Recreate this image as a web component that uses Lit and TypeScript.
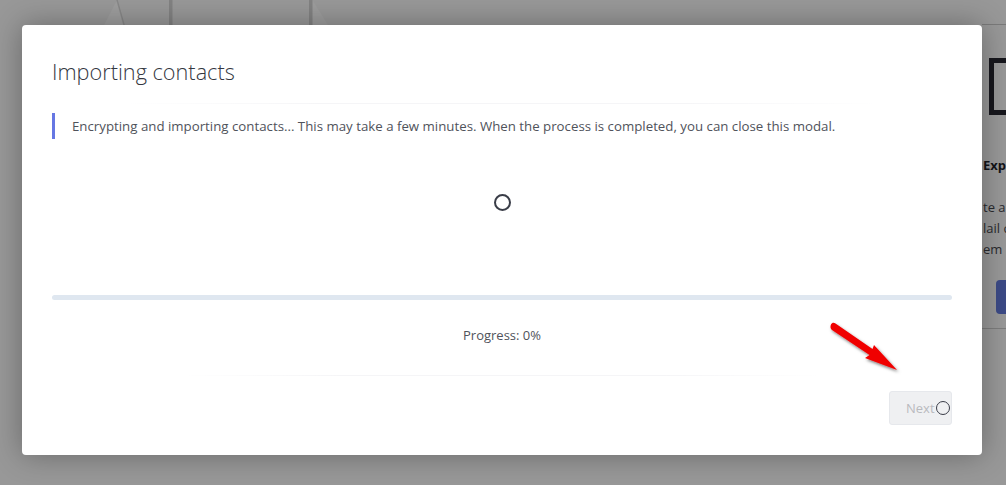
import { LitElement, html, css, svg } from "lit";
import { customElement } from "lit/decorators.js";

@customElement("app-root")
export class AppRoot extends LitElement {
  static styles = css`
    :host {
      display: block;
      position: relative;
      width: 1006px;
      height: 485px;
      overflow: hidden;
      font-family: "Open Sans", "Noto Sans", sans-serif;
      background: #989898;
    }
    .bg { position: absolute; inset: 0; }
    .side {
      position: absolute;
      left: 982px;
      top: 0;
      width: 24px;
      height: 485px;
      overflow: hidden;
      font-size: 13px;
      color: #1e1e22;
    }
    .glyph {
      position: absolute;
      left: 7px;
      top: 58px;
      width: 30px;
      height: 57px;
      border: 5px solid #17171d;
      box-sizing: border-box;
      border-right: 0;
    }
    .side-t { position: absolute; white-space: nowrap; line-height: 18px; }
    .exp { left: 1px; top: 156px; font-weight: 700; color: #141418; }
    .l1 { left: 1px; top: 198px; color: #2a2a2e; }
    .l2 { left: 1px; top: 219px; color: #2a2a2e; }
    .l3 { left: 1px; top: 240px; color: #2a2a2e; }
    .cta {
      position: absolute;
      left: 14px;
      top: 280px;
      width: 30px;
      height: 34px;
      border-radius: 4px;
      background: #3c4a86;
    }
    .rule {
      position: absolute;
      left: 0;
      top: 328px;
      width: 24px;
      height: 1px;
      background: #7d7d7d;
    }
    .top-rule {
      position: absolute;
      left: 0;
      top: 24px;
      width: 24px;
      height: 1px;
      background: #7a7a7a;
    }
    .modal {
      position: absolute;
      left: 22px;
      top: 25px;
      width: 960px;
      height: 430px;
      box-sizing: border-box;
      padding: 30px 30px 30px;
      background: #fff;
      border-radius: 4px;
      box-shadow: 0 0 30px rgba(0, 0, 0, 0.32);
      display: flex;
      flex-direction: column;
      color: #4a4d55;
    }
    h1 {
      margin: 0;
      height: 34px;
      font-size: 21.7px;
      line-height: 34px;
      font-weight: 300;
      color: #34373f;
    }
    .div1 {
      margin-top: 14px;
      height: 1px;
      background: linear-gradient(90deg, #fff 8%, #f5f5f7 30%, #f5f5f7 70%, #fff 92%);
    }
    .alert {
      margin-top: 9px;
      height: 26px;
      border-left: 3px solid #6677e3;
      padding-left: 17px;
      font-size: 13.27px;
      line-height: 26px;
      white-space: nowrap;
      color: #50535b;
    }
    .spin-row {
      display: flex;
      justify-content: center;
      margin-top: 55px;
      height: 18px;
    }
    .spin {
      width: 17px;
      height: 17px;
      box-sizing: border-box;
      border: 2px solid #3a3d48;
      border-radius: 50%;
    }
    .bar {
      margin-top: 84px;
      height: 6px;
      border-radius: 3px;
      background: #dfe7f0;
    }
    .progress {
      margin-top: 25px;
      text-align: center;
      font-size: 13px;
      line-height: 20px;
      color: #50535b;
    }
    .div2 {
      margin-top: 30px;
      margin-inline: 130px;
      height: 1px;
      background: linear-gradient(90deg, #fff 0%, #f5f5f7 25%, #f5f5f7 75%, #fff 100%);
    }
    .foot {
      margin-top: 15px;
      display: flex;
      justify-content: flex-end;
    }
    .next {
      position: relative;
      width: 63px;
      height: 34px;
      box-sizing: border-box;
      border: 1px solid #e6e8ec;
      border-radius: 3px;
      background: #eff0f2;
      color: #b9babe;
      font: 13px/32px "Open Sans", "Noto Sans", sans-serif;
      padding: 0 0 0 16px;
      text-align: left;
    }
    .next .spin {
      position: absolute;
      right: 1px;
      top: 9px;
      width: 14px;
      height: 14px;
      border-width: 1.8px;
    }
    .arrow {
      position: absolute;
      left: 825px;
      top: 320px;
      width: 80px;
      height: 60px;
      overflow: visible;
    }
  `;

  private backdrop() {
    return html`<svg class="bg" width="1006" height="485" viewBox="0 0 1006 485">
      ${svg`
        <path d="M117 0 L104 25 L124 25 Z" fill="#fff" fill-opacity="0.06" />
        <path d="M117 0 L124 25" stroke="#000" stroke-opacity="0.12" stroke-width="1.5" fill="none" />
        <rect x="169" y="0" width="3.5" height="25" fill="#000" fill-opacity="0.14" />
        <rect x="309" y="0" width="3.5" height="25" fill="#000" fill-opacity="0.14" />
        <path d="M312.5 0 L312.5 25 L328 25 Z" fill="#fff" fill-opacity="0.05" />
      `}
    </svg>`;
  }

  render() {
    return html`
      ${this.backdrop()}
      <div class="side">
        <div class="top-rule"></div>
        <div class="glyph"></div>
        <div class="side-t exp">Exp</div>
        <div class="side-t l1">te a</div>
        <div class="side-t l2">lail c</div>
        <div class="side-t l3">em</div>
        <div class="cta"></div>
        <div class="rule"></div>
      </div>
      <div class="modal">
        <h1>Importing contacts</h1>
        <div class="div1"></div>
        <div class="alert">Encrypting and importing contacts... This may take a few minutes. When the process is completed, you can close this modal.</div>
        <div class="spin-row"><div class="spin"></div></div>
        <div class="bar"></div>
        <div class="progress">Progress: 0%</div>
        <div class="div2"></div>
        <div class="foot">
          <button class="next" disabled>Next<span class="spin"></span></button>
        </div>
      </div>
      <svg class="arrow" viewBox="0 0 80 60">
        <defs>
          <filter id="ds" x="-30%" y="-30%" width="170%" height="170%">
            <feDropShadow dx="1.5" dy="2" stdDeviation="1.5" flood-color="#000" flood-opacity="0.5" />
          </filter>
        </defs>
        <path
          d="M6 4.5 C7 2.5 9 2.5 10.5 3.5 L47.5 29 L49 25 L72 50 L40 38 L44.5 35 L7 10 C5.5 9 5 6.5 6 4.5 Z"
          fill="#f00000"
          filter="url(#ds)"
        />
      </svg>
    `;
  }
}
